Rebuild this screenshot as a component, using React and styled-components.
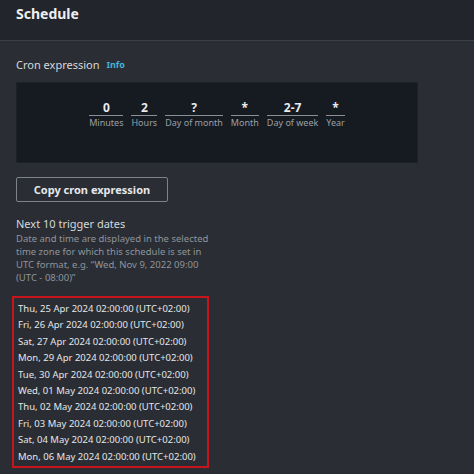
import { createGlobalStyle, styled } from 'styled-components';

const GlobalStyle = createGlobalStyle`
    html, body {
        margin: 0;
        padding: 0;
        background: #2a2d33;
        font-family: 'Noto Sans', 'Open Sans', sans-serif;
    }
`;

const cronFields = [
    { value: '0', label: 'Minutes' },
    { value: '2', label: 'Hours' },
    { value: '?', label: 'Day of month' },
    { value: '*', label: 'Month' },
    { value: '2-7', label: 'Day of week' },
    { value: '*', label: 'Year' },
];

const triggerDates = [
    'Thu, 25 Apr 2024 02:00:00 (UTC+02:00)',
    'Fri, 26 Apr 2024 02:00:00 (UTC+02:00)',
    'Sat, 27 Apr 2024 02:00:00 (UTC+02:00)',
    'Mon, 29 Apr 2024 02:00:00 (UTC+02:00)',
    'Tue, 30 Apr 2024 02:00:00 (UTC+02:00)',
    'Wed, 01 May 2024 02:00:00 (UTC+02:00)',
    'Thu, 02 May 2024 02:00:00 (UTC+02:00)',
    'Fri, 03 May 2024 02:00:00 (UTC+02:00)',
    'Sat, 04 May 2024 02:00:00 (UTC+02:00)',
    'Mon, 06 May 2024 02:00:00 (UTC+02:00)',
];

const App = () => {
    return (
        <Page>
            <GlobalStyle />
            <Header>
                <Title>Schedule</Title>
            </Header>
            <Content>
                <LabelRow>
                    <FieldLabel>Cron expression</FieldLabel>
                    <InfoLink>Info</InfoLink>
                </LabelRow>
                <CronBox>
                    <CronFields>
                        {cronFields.map((field, index) => (
                            <CronField key={index}>
                                <CronValue>{field.value}</CronValue>
                                <CronLabel>{field.label}</CronLabel>
                            </CronField>
                        ))}
                    </CronFields>
                </CronBox>
                <CopyButton>Copy cron expression</CopyButton>
                <DatesTitle>Next 10 trigger dates</DatesTitle>
                <Description>
                    Date and time are displayed in the selected
                    <br />
                    time zone for which this schedule is set in
                    <br />
                    UTC format, e.g. “Wed, Nov 9, 2022 09:00
                    <br />
                    (UTC - 08:00)”
                </Description>
                <DateList>
                    {triggerDates.map((date) => (
                        <DateItem key={date}>{date}</DateItem>
                    ))}
                </DateList>
            </Content>
        </Page>
    );
};

const Page = styled.div`
    width: 474px;
    height: 474px;
    overflow: hidden;
    background: #2a2d33;
`;
const Header = styled.div`
    height: 41px;
    box-sizing: border-box;
    padding: 2px 16px 0;
    background: #22252c;
    border-bottom: 1px solid #3b3f46;
`;
const Title = styled.h2`
    margin: 0;
    font-size: 14px;
    line-height: 24px;
    font-weight: 700;
    color: #eceef0;
`;
const Content = styled.div`
    display: flex;
    flex-direction: column;
    align-items: flex-start;
    padding: 14px 16px 0;
`;
const LabelRow = styled.div`
    display: flex;
    align-items: center;
    gap: 7px;
    height: 18px;
`;
const FieldLabel = styled.span`
    font-size: 11px;
    color: #d5d9dd;
`;
const InfoLink = styled.span`
    font-size: 9px;
    font-weight: 700;
    color: #44b5d6;
`;
const CronBox = styled.div`
    margin-top: 9px;
    width: 402px;
    height: 81px;
    box-sizing: border-box;
    padding-top: 17px;
    background: #161a21;
    border: 1px solid #1d2128;
    display: flex;
    justify-content: center;
`;
const CronFields = styled.div`
    display: flex;
    align-items: flex-start;
    gap: 8px;
    height: fit-content;
`;
const CronField = styled.div`
    display: flex;
    flex-direction: column;
    align-items: stretch;
`;
const CronValue = styled.div`
    font-size: 12px;
    font-weight: 700;
    line-height: 15px;
    color: #e9ebed;
    text-align: center;
    border-bottom: 1px solid #8a9097;
`;
const CronLabel = styled.div`
    font-size: 9px;
    line-height: 13px;
    color: #9aa0a7;
    text-align: center;
    white-space: nowrap;
`;
const CopyButton = styled.button`
    margin-top: 14px;
    width: 152px;
    height: 25px;
    padding: 0;
    background: transparent;
    border: 1px solid #7e838a;
    border-radius: 2px;
    font-family: 'Noto Sans', 'Open Sans', sans-serif;
    font-size: 11px;
    font-weight: 700;
    color: #e6e8eb;
`;
const DatesTitle = styled.div`
    margin-top: 14px;
    font-size: 11px;
    line-height: 16px;
    color: #d5d9dd;
`;
const Description = styled.div`
    font-size: 9.5px;
    line-height: 13px;
    color: #8f959c;
`;
const DateList = styled.div`
    margin: 12px 0 0 -4px;
    width: 197px;
    height: 172px;
    box-sizing: border-box;
    padding: 3px 0 0 4px;
    border: 2px solid #c8141c;
    display: flex;
    flex-direction: column;
`;
const DateItem = styled.div`
    font-size: 9.5px;
    line-height: 16.4px;
    color: #e4e7ea;
    white-space: nowrap;
`;

export default App;
